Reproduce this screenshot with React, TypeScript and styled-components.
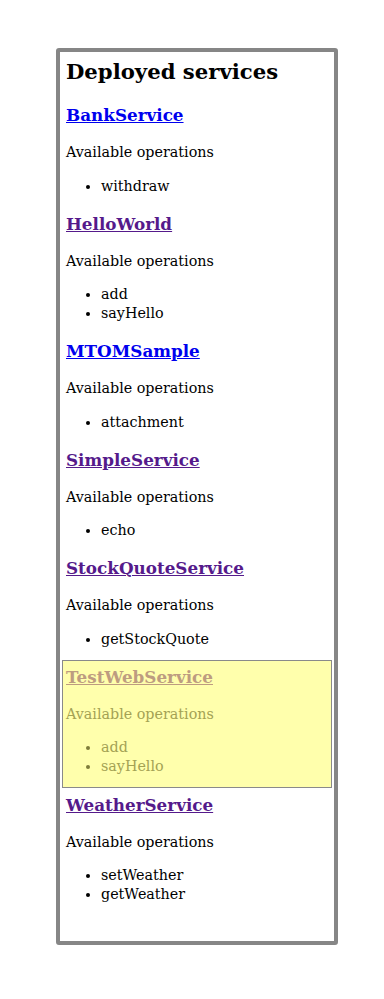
import React from "react";
import styled, { createGlobalStyle } from "styled-components";

const Global = createGlobalStyle`
  html, body { background: #ffffff; }
  body {
    margin: 8px;
    font-family: "DejaVu Serif", "Liberation Serif", serif;
    color: #000000;
  }
`;

const Panel = styled.div`
  box-sizing: border-box;
  margin: 40px 0 0 48px;
  width: 282px;
  height: 897px;
  border: 4px solid #868686;
  border-radius: 3px;
  padding: 7px 2px 0 2px;
  background: #ffffff;
`;

const Title = styled.h2`
  margin: 0 0 13px 4px;
  font-size: 21.2px;
  line-height: 26px;
  font-weight: bold;
`;

const Section = styled.div<{ $active?: boolean }>`
  border: 1px solid ${(p) => (p.$active ? "#8a8a8a" : "transparent")};
  background: ${(p) => (p.$active ? "#ffffac" : "transparent")};
  padding: 6px 3px 10.1px 3px;
  color: ${(p) => (p.$active ? "#a4a254" : "#000000")};
  li::marker {
    color: ${(p) => (p.$active ? "#7f7d3a" : "#000000")};
  }
`;

const ServiceLink = styled.a<{ $tone: "new" | "visited" | "faded" }>`
  display: block;
  width: max-content;
  font-size: 16.8px;
  line-height: 20px;
  font-weight: bold;
  text-decoration: underline;
  color: ${(p) =>
    p.$tone === "new" ? "#0000ee" : p.$tone === "visited" ? "#551a8b" : "#bd9c80"};
`;

const Caption = styled.p`
  margin: 18px 0 15.5px 0;
  font-size: 14.3px;
  line-height: 18px;
`;

const Ops = styled.ul`
  margin: 0;
  padding-left: 35px;
  font-size: 14.3px;
  line-height: 19px;
`;

type Svc = { name: string; tone: "new" | "visited" | "faded"; ops: string[]; active?: boolean };

const services: Svc[] = [
  { name: "BankService", tone: "new", ops: ["withdraw"] },
  { name: "HelloWorld", tone: "visited", ops: ["add", "sayHello"] },
  { name: "MTOMSample", tone: "new", ops: ["attachment"] },
  { name: "SimpleService", tone: "visited", ops: ["echo"] },
  { name: "StockQuoteService", tone: "visited", ops: ["getStockQuote"] },
  { name: "TestWebService", tone: "faded", ops: ["add", "sayHello"], active: true },
  { name: "WeatherService", tone: "visited", ops: ["setWeather", "getWeather"] },
];

export default function App() {
  return (
    <>
      <Global />
      <Panel>
        <Title>Deployed services</Title>
        {services.map((s) => (
          <Section key={s.name} $active={s.active}>
            <ServiceLink href="#" $tone={s.tone}>
              {s.name}
            </ServiceLink>
            <Caption>Available operations</Caption>
            <Ops>
              {s.ops.map((o) => (
                <li key={o}>{o}</li>
              ))}
            </Ops>
          </Section>
        ))}
      </Panel>
    </>
  );
}
